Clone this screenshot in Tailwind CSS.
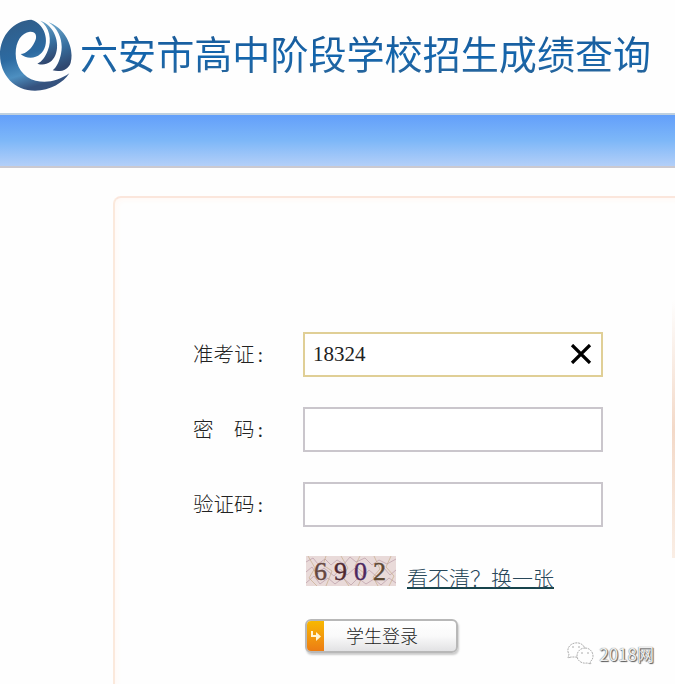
<!DOCTYPE html>
<html lang="zh-CN">

<head>
    <meta charset="UTF-8">
    <meta name="viewport" content="width=device-width, initial-scale=1.0">
    <script src="https://cdn.jsdelivr.net/npm/@tailwindcss/browser@4"></script>
    <title>六安市高中阶段学校招生成绩查询</title>
</head>

<body class="h-[684px] overflow-hidden bg-[#fefefe] font-['Liberation_Serif','Noto_Sans_CJK_SC',serif] text-[#222]">

    <!-- Header -->
    <header class="flex h-[113px] items-start overflow-hidden pt-[19px]">
        <svg class="h-[73px] w-[73px] shrink-0" viewBox="0 56 219 219">
            <defs>
                <linearGradient id="ring" x1="0" y1="0" x2="0.3" y2="1">
                    <stop offset="0" stop-color="#315b85"/>
                    <stop offset="0.55" stop-color="#2c6aa1"/>
                    <stop offset="0.8" stop-color="#4d8fc0"/>
                    <stop offset="1" stop-color="#35527e"/>
                </linearGradient>
                <linearGradient id="wing" x1="0" y1="0" x2="0.2" y2="1">
                    <stop offset="0" stop-color="#71acd0"/>
                    <stop offset="0.6" stop-color="#376f9f"/>
                    <stop offset="1" stop-color="#304870"/>
                </linearGradient>
            </defs>
            <path fill="url(#ring)" d="M94 58C42 60 0 105 0 163C0 224 44 271 105 271C151 271 190 247 208 219C177 241 140 250 107 241C69 231 47 198 47 160C47 123 64 97 90 94C108 93 113 108 104 125C94 145 79 160 62 161C75 174 103 178 121 161C151 136 141 73 94 58Z"/>
            <path fill="url(#wing)" d="M121 61C148 79 157 119 143 151C136 169 126 184 112 190C135 198 157 187 166 165C182 127 162 74 121 61Z"/>
            <path fill="url(#wing)" d="M146 66C180 88 190 128 183 160C179 181 170 200 158 210C182 217 206 208 212 187C224 141 194 83 146 66Z"/>
        </svg>
        <h1 class="ml-[7px] mt-[8px] whitespace-nowrap bg-linear-to-b from-[#1d5790] via-[#1266ae] to-[#2e628e] bg-clip-text text-[38.1px] font-normal leading-[58px] text-transparent">六安市高中阶段学校招生成绩查询</h1>
    </header>
    <div class="h-[55px] border-t-2 border-b-2 border-t-[#bfd0df] border-b-[#cbc9d0] bg-linear-to-b from-[#639ffa] via-[#7db7f8] to-[#b3cff8]"></div>

    <!-- Login panel -->
    <main class="relative ml-[113px] mt-[28px] h-[488px] rounded-tl-lg border-t-2 border-l-2 border-t-[#fbe6dc] border-l-[#fbe9dc] pl-[78px] pt-[134px] text-[20.5px] shadow-[inset_3px_3px_4px_#fffaf7]">
        <div class="absolute top-[102px] right-0 h-[258px] w-[3px] bg-linear-to-b from-[#fefefe] via-[#f3d9c8] to-[#faeee5]"></div>
        <div class="flex flex-col gap-[30px]">
            <div class="flex h-[45px] items-center">
                <label for="exam-no" class="w-[110px] pt-px font-light">准考证<span class="ml-[3px]">:</span></label>
                <div class="relative">
                    <input class="block h-[45px] w-[300px] border-2 border-[#e0cf96] bg-white px-2 font-['Liberation_Serif',serif] text-[21px] outline-none" type="text" id="exam-no" value="18324">
                    <svg class="absolute top-[12px] right-[11px] h-5 w-[22px]" viewBox="0 0 22 20" fill="none" stroke="#000" stroke-width="3.2">
                        <path d="M2 1L20 19M20 1L2 19"/>
                    </svg>
                </div>
            </div>
            <div class="flex h-[45px] items-center">
                <label for="password" class="w-[110px] pt-px font-light">密　码<b class="ml-[3px]">:</b></label>
                <input class="block h-[45px] w-[300px] border-2 border-[#cac6cc] bg-white px-2 outline-none" type="password" id="password">
            </div>
            <div class="flex h-[45px] items-center">
                <label for="captcha" class="w-[110px] pt-px font-light">验证码<b class="ml-[3px]">:</b></label>
                <input class="block h-[45px] w-[300px] border-2 border-[#cac6cc] bg-white px-2 outline-none" type="text" id="captcha">
            </div>
        </div>

        <div class="mt-[29px] ml-[113px] flex items-start">
            <svg class="h-[30px] w-[90px]" viewBox="0 0 90 30" font-family="Liberation Serif, serif" font-size="26" stroke-width="0.4">
                <rect width="90" height="30" fill="#e9dad9"/>
                <g fill="none" stroke="#b99aa6" stroke-width="0.9" opacity="0.75">
                    <path d="M0 6L7 2L12 8L19 3L25 9L31 4L38 8L44 1L50 6L59 2L66 9L73 4L81 8L90 3"/>
                    <path d="M0 16L6 11L11 18L18 12L28 20L34 13L41 19L49 12L57 21L63 14L70 20L78 12L84 19L90 14"/>
                    <path d="M0 27L8 20L14 28L22 22L29 28L37 22L45 29L52 22L60 28L68 23L75 29L83 22L90 27"/>
                </g>
                <g fill="none" stroke="#c4a985" stroke-width="0.9" opacity="0.7">
                    <path d="M2 0L9 12L3 22L11 30M20 0L17 9L26 15L20 30M35 0L42 12L36 20L43 30"/>
                    <path d="M54 0L49 10L58 17L52 30M68 0L74 13L67 21L72 30M85 0L80 11L88 20L83 30"/>
                </g>
                <text x="8" y="24" fill="#65473f" stroke="#65473f">6</text>
                <text x="28" y="24" fill="#4f2830" stroke="#4f2830">9</text>
                <text x="48" y="24" fill="#4d2860" stroke="#4d2860">0</text>
                <text x="67" y="24" fill="#5e4933" stroke="#5e4933">2</text>
            </svg>
            <a href="#" class="mt-[9px] ml-[11px] h-[24px] whitespace-nowrap border-b-2 border-[#17434b] text-[21px] font-light leading-[28px] text-[#29485a]">看不清？换一张</a>
        </div>

        <button class="mt-[30px] ml-[112px] flex h-[34px] w-[153px] items-stretch overflow-hidden rounded-md border-2 border-[#b8b8b8] bg-linear-to-b from-white via-[#fafafa] to-[#e2e2e4] shadow-[1px_2px_2px_#ccc]" type="button">
            <span class="flex w-[17px] items-center justify-center bg-linear-to-b from-[#f8b800] to-[#ec7c13]">
                <svg class="h-[12px] w-[12px]" viewBox="0 0 12 12" fill="none" stroke="#fff5d6" stroke-width="2">
                    <path d="M2 1V6H7"/>
                    <path d="M6 2L11 6.5L6 11Z" fill="#fff5d6" stroke="none"/>
                </svg>
            </span>
            <span class="ml-[22px] text-[18px] font-light leading-[32px]">学生登录</span>
        </button>

        <!-- Watermark -->
        <div class="absolute top-[444px] right-[21px] flex items-center gap-[5px] text-[#666]">
            <svg class="h-6 w-[27px]" viewBox="0 0 27 24" fill="#fefefe" stroke="#999" stroke-width="0.8" stroke-dasharray="2 0.8">
                <path d="M4 15L1 16L2 12C-1 8 2 2 8 1C14 0 18 4 18 8C18 13 13 16 8 15Z"/>
                <path d="M18 6C23 6 26 10 26 14C26 17 25 18 23 20L24 22L20 21C14 22 10 18 10 14C10 9 14 6 18 6Z"/>
                <path d="M5 5H7M11 5H13M14 11H16M20 11H22"/>
            </svg>
            <span class="-mt-px font-['Noto_Sans_CJK_SC',sans-serif] text-[17px] leading-[24px] text-[#eee] [text-shadow:1px_1px_1px_#555,0_0_1px_#555]">2018网</span>
        </div>
    </main>

</body>

</html>
